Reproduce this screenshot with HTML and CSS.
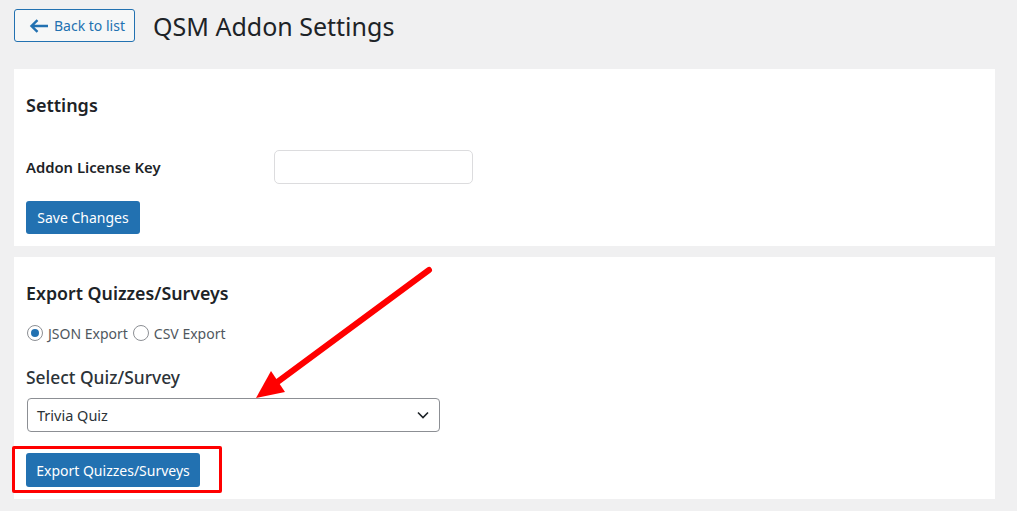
FILE: index.html
```html
<!DOCTYPE html>
<html>
<head>
<meta charset="utf-8">
<link rel="stylesheet" href="styles.css">
</head>
<body>
<div class="page">
  <header class="top">
    <a class="back-btn" href="#">
      <svg class="back-icon" viewBox="0 0 20 14" width="20" height="14"><path d="M19 7H2.5M8.5 1.2L2.5 7l6 5.8" fill="none" stroke="#2271b1" stroke-width="2.4" stroke-linejoin="miter"/></svg>
      <span>Back to list</span>
    </a>
    <h1 class="title">QSM Addon Settings</h1>
  </header>

  <section class="card card-settings">
    <h2 class="card-title">Settings</h2>
    <div class="form-row">
      <label class="row-label">Addon License Key</label>
      <input class="text-input" type="text">
    </div>
    <button class="primary-btn">Save Changes</button>
  </section>

  <section class="card card-export">
    <h2 class="card-title">Export Quizzes/Surveys</h2>
    <div class="radios">
      <label class="radio"><span class="radio-dot checked"></span>JSON Export</label>
      <label class="radio"><span class="radio-dot"></span>CSV Export</label>
    </div>
    <h3 class="sub-title">Select Quiz/Survey</h3>
    <div class="select">
      <span>Trivia Quiz</span>
      <svg class="chev" viewBox="0 0 16 16" width="16" height="16"><path d="M3 5.5l5 5 5-5" fill="none" stroke="#1d2327" stroke-width="1.6"/></svg>
    </div>
    <div class="highlight">
      <button class="primary-btn">Export Quizzes/Surveys</button>
    </div>
  </section>

  <svg class="arrow" width="1017" height="511" viewBox="0 0 1017 511">
    <line x1="429" y1="270" x2="272" y2="386" stroke="#ff0000" stroke-width="6" stroke-linecap="round"/>
    <polygon points="256,398 271,371 285,392" fill="#ff0000"/>
  </svg>
</div>
</body>
</html>
```

FILE: styles.css
```css
html, body {
  margin: 0;
  padding: 0;
  background: #f0f0f1;
}
body {
  font-family: "Noto Sans", "Open Sans", sans-serif;
  color: #1d2327;
  width: 1017px;
  height: 511px;
  overflow: hidden;
}
.page {
  position: relative;
  padding: 9px 22px 0 14px;
}
.top {
  display: flex;
  align-items: center;
  gap: 18px;
  height: 33px;
}
.back-btn {
  box-sizing: border-box;
  display: flex;
  align-items: center;
  gap: 5px;
  height: 33px;
  width: 121px;
  padding: 0 0 0 14px;
  border: 1px solid #2271b1;
  border-radius: 3px;
  background: #f6f7f7;
  color: #2271b1;
  text-decoration: none;
  font-size: 14px;
  white-space: nowrap;
}
.back-icon { flex: none; }
.title {
  margin: 0;
  font-size: 25px;
  font-weight: 400;
  color: #1d2327;
}
.card {
  background: #fff;
  padding: 0 12px;
}
.card-settings {
  margin-top: 27px;
  height: 177px;
  box-sizing: border-box;
  padding-top: 24px;
}
.card-title {
  margin: 0;
  font-size: 18px;
  font-weight: 600;
  line-height: 24px;
}
.card-export .card-title {
  font-size: 17.8px;
}
.form-row {
  display: flex;
  align-items: center;
  margin-top: 33px;
  height: 34px;
}
.row-label {
  width: 248px;
  font-size: 14.8px;
  font-weight: 600;
}
.text-input {
  box-sizing: border-box;
  width: 199px;
  height: 34px;
  border: 1px solid #dcdcde;
  border-radius: 5px;
  background: #fff;
  margin: 0;
}
.primary-btn {
  box-sizing: border-box;
  height: 33px;
  padding: 0;
  border: 0;
  border-radius: 3px;
  background: #2271b1;
  color: #fff;
  font-family: inherit;
  font-size: 14px;
  white-space: nowrap;
  text-align: center;
}
.card-settings .primary-btn {
  margin-top: 17px;
  width: 114px;
}
.card-export {
  margin-top: 11px;
  height: 242px;
  box-sizing: border-box;
  padding-top: 24px;
}
.radios {
  display: flex;
  gap: 4px;
  margin-top: 18px;
  height: 20px;
  align-items: center;
}
.radio {
  display: flex;
  align-items: center;
  gap: 5px;
  font-size: 14px;
  color: #50575e;
}
.radio-dot {
  box-sizing: border-box;
  width: 16px;
  height: 16px;
  border-radius: 50%;
  border: 1px solid #8c8f94;
  background: #fff;
  margin-left: 1px;
  position: relative;
}
.radio-dot.checked::after {
  content: "";
  position: absolute;
  left: 3px;
  top: 3px;
  width: 8px;
  height: 8px;
  border-radius: 50%;
  background: #2271b1;
}
.sub-title {
  margin: 22px 0 0;
  font-size: 17.4px;
  font-weight: 500;
  line-height: 24px;
  color: #2c3338;
}
.select {
  box-sizing: border-box;
  display: flex;
  align-items: center;
  justify-content: space-between;
  width: 413px;
  height: 34px;
  margin: 9px 0 0 1px;
  padding: 0 8px 0 9px;
  border: 1px solid #8c8f94;
  border-radius: 4px;
  font-size: 14.5px;
  color: #2c3338;
}
.highlight {
  display: inline-block;
  margin: 14px 0 0 -14px;
  padding: 4px 19px 3px 11px;
  border: 3px solid #ff0000;
  border-radius: 2px;
  line-height: 0;
}
.highlight .primary-btn {
  width: 174px;
  height: 34px;
  line-height: normal;
}
.arrow {
  position: absolute;
  left: 0;
  top: 0;
  pointer-events: none;
}
```
